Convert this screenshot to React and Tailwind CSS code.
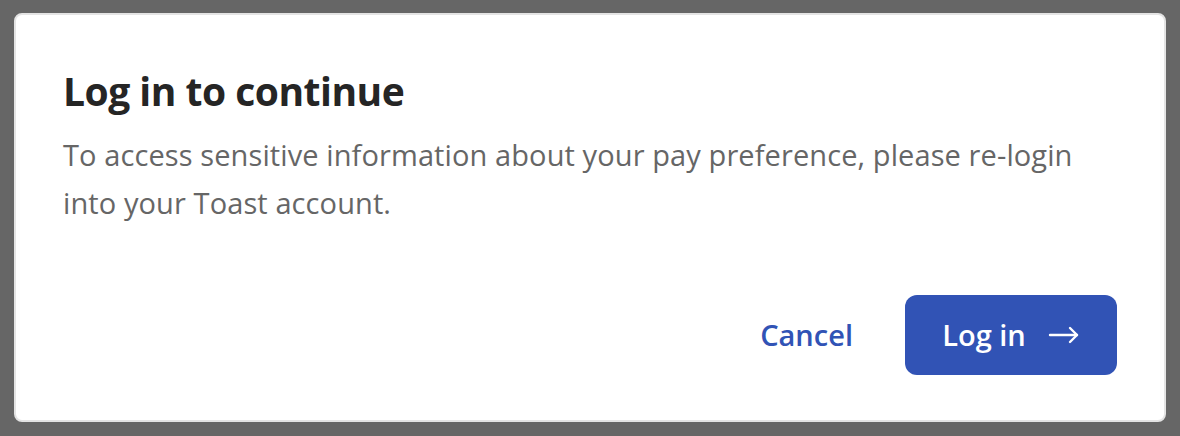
export default function App() {
  return (
    <div className="h-[436px] w-[1180px] bg-[#666666] px-[14px] pt-[13px] pb-[14px]" style={{ fontFamily: '"Open Sans", Lato, sans-serif' }}>
      <div className="flex h-full flex-col rounded-[8px] border-2 border-[#e4e4e4] bg-white px-[47px] pt-[48px] pb-[45px]">
        <h2 className="text-[39px] font-bold leading-[56px] tracking-[-0.5px] text-[#252525]">Log in to continue</h2>
        <p className="mt-[12px] max-w-[1035px] text-[29px] leading-[48px] tracking-[0.1px] text-[#666666]">
          To access sensitive information about your pay preference, please re-login into your Toast account.
        </p>
        <div className="mt-auto flex items-center justify-end gap-[52px]">
          <button type="button" className="text-[29px] font-semibold text-[#3153b5]">Cancel</button>
          <button
            type="button"
            className="flex h-[80px] w-[212px] items-center justify-center gap-[22px] rounded-[12px] bg-[#3153b5] text-[29px] font-semibold text-white"
          >
            Log in
            <svg width="32" height="18" viewBox="0 0 32 18" fill="none" stroke="currentColor" strokeWidth="2.4" strokeLinecap="round" strokeLinejoin="round">
              <path d="M2 9h27" />
              <path d="M22 2l7 7-7 7" />
            </svg>
          </button>
        </div>
      </div>
    </div>
  );
}
